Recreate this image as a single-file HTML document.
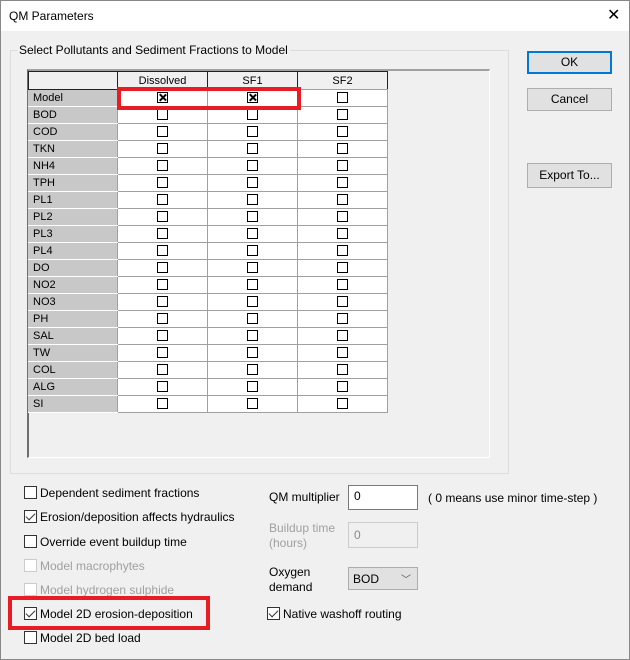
<!DOCTYPE html>
<html><head><style>
*{box-sizing:border-box;margin:0;padding:0}
body{width:630px;height:660px;background:#f0f0f0;font-family:"Liberation Sans",sans-serif;font-size:12px;color:#000;position:relative;overflow:hidden}
.a{position:absolute;white-space:nowrap}
.cb{position:absolute;width:13px;height:13px;border:1px solid #333;background:#fff}
.cb.dis{border-color:#ccc}
.ck::after{content:"";position:absolute;left:3px;top:0px;width:4px;height:8px;border:solid #333;border-width:0 1.5px 1.5px 0;transform:rotate(45deg)}
.btn{position:absolute;left:527px;width:85px;border:1px solid #adadad;background:#e1e1e1;text-align:center}
table{border-collapse:collapse;position:absolute;left:29px;top:71px}
td{border:1px solid #a0a0a0;height:17px;width:90px;background:#fff;text-align:center;padding:0;font-size:11px}
td.h{background:#c8c8c8;text-align:left;padding-left:4px;width:89px;border-color:#fff #a0a0a0 #fff #c8c8c8}
tr.hd td{height:18px;background:#f0f0f0;border-color:#222 #222 #a0a0a0 #222}
tr.hd td.h{background:#f0f0f0;border-color:#222}
.g{display:inline-block;width:11px;height:11px;border:1px solid #000;background:#fff;vertical-align:middle;position:relative;top:-1px}
.x::before,.x::after{content:"";position:absolute;left:4px;top:0;width:1.6px;height:9px;background:#000;transform:rotate(45deg)}
.x::after{transform:rotate(-45deg)}
.inp{position:absolute;left:348px;width:70px;background:#fff;border:1px solid #7a7a7a;padding:3px 5px}
.gr{color:#a0a0a0}
</style></head><body>
<div class="a" style="left:0;top:0;width:630px;height:660px;border:1px solid #888"></div>
<div class="a" style="left:1px;top:1px;width:628px;height:30px;background:#fff"></div>
<div class="a" style="left:9px;top:9px;font-size:12px">QM Parameters</div>
<div class="a" style="left:607px;top:5px;font-size:16px;font-weight:300">✕</div>

<div class="a" style="left:10px;top:50px;width:499px;height:424px;border:1px solid #dcdcdc"></div>
<div class="a" style="left:17px;top:43px;background:#f0f0f0;padding:0 2px">Select Pollutants and Sediment Fractions to Model</div>
<div class="a" style="left:27px;top:69px;width:463px;height:389px;border-left:2px solid #707070;border-top:2px solid #a0a0a0;border-right:1px solid #fff;border-bottom:1px solid #fff"></div>
<table style="left:28px">
<tr class="hd"><td class="h"></td><td>Dissolved</td><td>SF1</td><td>SF2</td></tr>
<tr><td class="h">Model</td><td><span class="g x"></span></td><td><span class="g x"></span></td><td><span class="g"></span></td></tr>
<tr><td class="h">BOD</td><td><span class="g"></span></td><td><span class="g"></span></td><td><span class="g"></span></td></tr>
<tr><td class="h">COD</td><td><span class="g"></span></td><td><span class="g"></span></td><td><span class="g"></span></td></tr>
<tr><td class="h">TKN</td><td><span class="g"></span></td><td><span class="g"></span></td><td><span class="g"></span></td></tr>
<tr><td class="h">NH4</td><td><span class="g"></span></td><td><span class="g"></span></td><td><span class="g"></span></td></tr>
<tr><td class="h">TPH</td><td><span class="g"></span></td><td><span class="g"></span></td><td><span class="g"></span></td></tr>
<tr><td class="h">PL1</td><td><span class="g"></span></td><td><span class="g"></span></td><td><span class="g"></span></td></tr>
<tr><td class="h">PL2</td><td><span class="g"></span></td><td><span class="g"></span></td><td><span class="g"></span></td></tr>
<tr><td class="h">PL3</td><td><span class="g"></span></td><td><span class="g"></span></td><td><span class="g"></span></td></tr>
<tr><td class="h">PL4</td><td><span class="g"></span></td><td><span class="g"></span></td><td><span class="g"></span></td></tr>
<tr><td class="h">DO</td><td><span class="g"></span></td><td><span class="g"></span></td><td><span class="g"></span></td></tr>
<tr><td class="h">NO2</td><td><span class="g"></span></td><td><span class="g"></span></td><td><span class="g"></span></td></tr>
<tr><td class="h">NO3</td><td><span class="g"></span></td><td><span class="g"></span></td><td><span class="g"></span></td></tr>
<tr><td class="h">PH</td><td><span class="g"></span></td><td><span class="g"></span></td><td><span class="g"></span></td></tr>
<tr><td class="h">SAL</td><td><span class="g"></span></td><td><span class="g"></span></td><td><span class="g"></span></td></tr>
<tr><td class="h">TW</td><td><span class="g"></span></td><td><span class="g"></span></td><td><span class="g"></span></td></tr>
<tr><td class="h">COL</td><td><span class="g"></span></td><td><span class="g"></span></td><td><span class="g"></span></td></tr>
<tr><td class="h">ALG</td><td><span class="g"></span></td><td><span class="g"></span></td><td><span class="g"></span></td></tr>
<tr><td class="h">SI</td><td><span class="g"></span></td><td><span class="g"></span></td><td><span class="g"></span></td></tr>
</table>
<div class="a" style="left:117px;top:87px;width:184px;height:23px;border:4px solid #e81c24"></div>

<div class="btn" style="top:51px;height:23px;border:2px solid #0078d7;line-height:19px">OK</div>
<div class="btn" style="top:88px;height:23px;line-height:21px">Cancel</div>
<div class="btn" style="top:163px;height:25px;line-height:23px">Export To...</div>

<div class="cb" style="left:24px;top:486px"></div><div class="a" style="left:40px;top:486px">Dependent sediment fractions</div>
<div class="cb ck" style="left:24px;top:510px"></div><div class="a" style="left:40px;top:510px">Erosion/deposition affects hydraulics</div>
<div class="cb" style="left:24px;top:535px"></div><div class="a" style="left:40px;top:535px">Override event buildup time</div>
<div class="cb dis" style="left:24px;top:559px"></div><div class="a gr" style="left:40px;top:559px">Model macrophytes</div>
<div class="cb dis" style="left:24px;top:583px"></div><div class="a gr" style="left:40px;top:583px">Model hydrogen sulphide</div>
<div class="cb ck" style="left:24px;top:607px"></div><div class="a" style="left:40px;top:607px">Model 2D erosion-deposition</div>
<div class="cb" style="left:24px;top:631px"></div><div class="a" style="left:40px;top:631px">Model 2D bed load</div>
<div class="a" style="left:8px;top:596px;width:202px;height:34px;border:4px solid #e81c24"></div>

<div class="a" style="left:269px;top:490px">QM multiplier</div>
<div class="inp" style="top:485px;height:25px">0</div>
<div class="a" style="left:428px;top:491px">( 0 means use minor time-step )</div>
<div class="a gr" style="left:269px;top:521px;line-height:15px">Buildup time<br>(hours)</div>
<div class="inp" style="top:522px;height:26px;background:#f0f0f0;border-color:#ccc;color:#888;padding-top:5px">0</div>
<div class="a" style="left:269px;top:565px;line-height:15px">Oxygen<br>demand</div>
<div class="inp" style="top:567px;height:23px;background:#e1e1e1;border-color:#adadad;padding-top:4px;padding-left:4px">BOD<span style="position:absolute;right:6px;top:3px;font-size:10px;color:#555">﹀</span></div>
<div class="cb ck" style="left:267px;top:607px"></div><div class="a" style="left:283px;top:607px">Native washoff routing</div>
</body></html>
